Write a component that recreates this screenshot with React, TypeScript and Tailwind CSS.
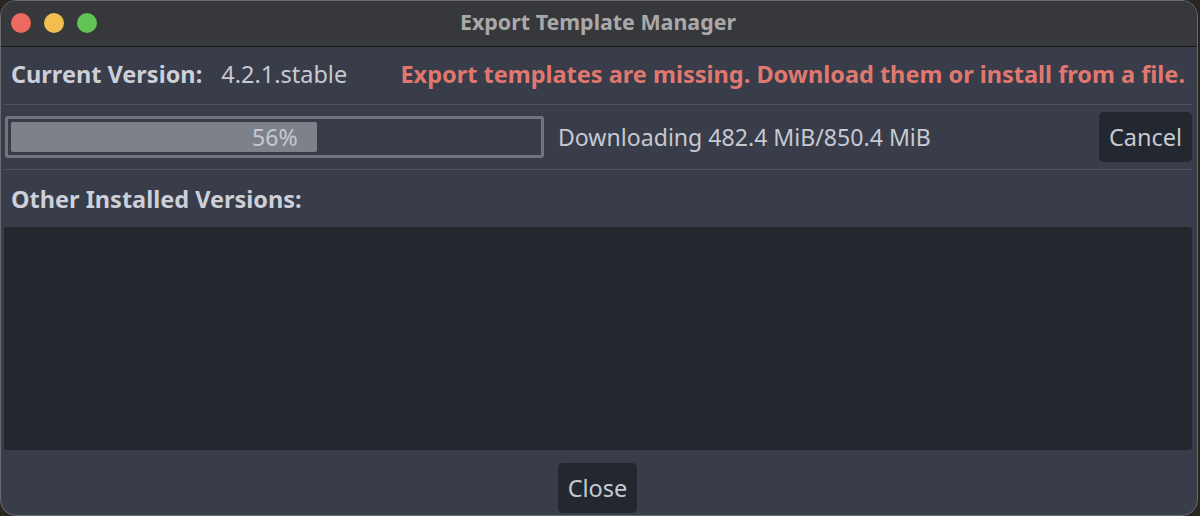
export default function App() {
  return (
    <div className="w-[1200px] h-[516px] bg-[#2a2521] overflow-hidden font-['Noto_Sans',sans-serif]">
      <div className="w-[1198px] h-[516px] flex flex-col rounded-[16px] overflow-hidden bg-[#383d49] border border-[#6a6b6d]">
        <div className="relative h-[46px] shrink-0 flex items-center justify-center bg-[#37383c] border-b border-[#17181b]">
          <div className="absolute left-[10px] top-[12px] flex gap-[13px]">
            <div className="w-[20px] h-[20px] rounded-full bg-[#ee6a5f]" />
            <div className="w-[20px] h-[20px] rounded-full bg-[#f4bd4f]" />
            <div className="w-[20px] h-[20px] rounded-full bg-[#61c454]" />
          </div>
          <span className="text-[21.4px] font-bold text-[#a9a9a9] leading-none mb-[4px] mr-[2px]">Export Template Manager</span>
        </div>
        <div className="flex-1 flex flex-col pl-[3px] pr-[5px]">
          <div className="h-[58px] shrink-0 flex items-center pl-[7px] pr-[7px] pb-[1px] border-b border-[#4c515c] text-[23.5px]">
            <span className="font-bold text-[#cdd0d8]">Current Version:</span>
            <span className="ml-[19px] text-[#c6c9d1]">4.2.1.stable</span>
            <span className="ml-auto font-bold text-[#e0786f]">Export templates are missing. Download them or install from a file.</span>
          </div>
          <div className="h-[65px] shrink-0 flex items-center border-b border-[#4c515c] text-[23.1px] text-[#c6c9d1]">
            <div className="ml-[1px] w-[539px] h-[42px] border-[3px] border-[#71757d] rounded-[3px] p-[3px] flex">
              <div className="relative w-[306px] bg-[#7d818a] rounded-[2px] flex items-center">
                <span className="absolute left-[241px] text-[#c6c9d1]">56%</span>
              </div>
            </div>
            <span className="ml-[14px]">Downloading 482.4 MiB/850.4 MiB</span>
            <button className="ml-auto w-[93px] h-[50px] pt-[1px] rounded-[5px] bg-[#232730] text-[23.5px] text-[#c6c9d1]">Cancel</button>
          </div>
          <div className="h-[57px] shrink-0 flex items-center pl-[7px] pt-[3px] text-[23.5px] font-bold text-[#cdd0d8]">Other Installed Versions:</div>
          <div className="h-[223px] shrink-0 bg-[#22262d] rounded-[3px]" />
          <div className="flex-1 flex items-start justify-center pt-[13px]">
            <button className="mr-[1px] w-[79px] h-[50px] pt-[1px] rounded-[5px] bg-[#232730] text-[23.5px] text-[#c6c9d1]">Close</button>
          </div>
        </div>
      </div>
    </div>
  );
}
